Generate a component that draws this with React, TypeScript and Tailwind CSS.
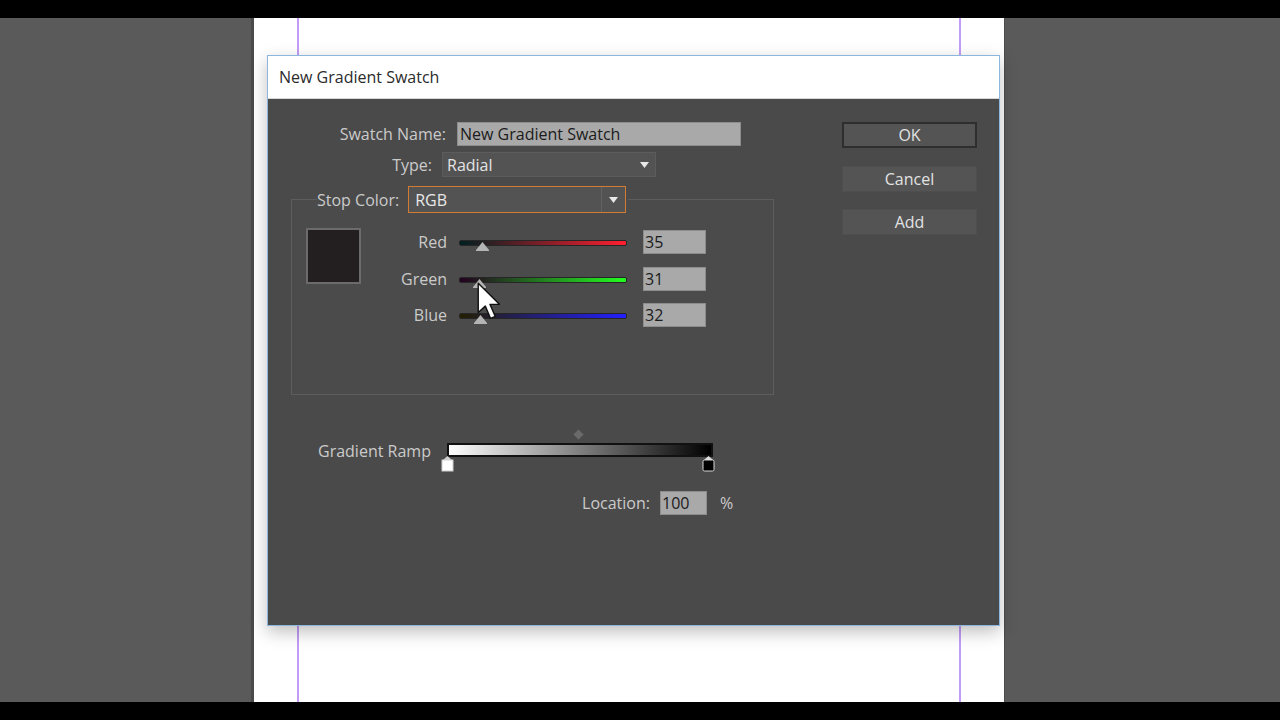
import React from "react";

const font = { fontFamily: '"Open Sans", "Liberation Sans", sans-serif' };

const channels = [
  { name: "Red", value: 35, track: "bg-[linear-gradient(to_right,#001f20,#ff1f30)]" },
  { name: "Green", value: 31, track: "bg-[linear-gradient(to_right,#230020,#23ff20)]" },
  { name: "Blue", value: 32, track: "bg-[linear-gradient(to_right,#231f00,#231fff)]" },
];

const Arrow = () => (
  <svg width="9" height="6" viewBox="0 0 9 6">
    <path d="M0 0 L9 0 L4.5 6 Z" fill="#e8e8e8" />
  </svg>
);

const Cursor = () => (
  <svg width="26" height="40" viewBox="0 0 22 34">
    <path
      d="M1 1 L1 26 L7 20.5 L11.5 31 L15.5 29.3 L11 19 L19 19 Z"
      fill="#ffffff"
      stroke="#111111"
      strokeWidth="1.2"
      strokeLinejoin="round"
    />
  </svg>
);

const Button = ({ label, primary }: { label: string; primary?: boolean }) => (
  <div
    className={`flex h-[26px] w-[135px] items-center justify-center bg-[#545454] text-[16px] text-[#e2e2e2] ${
      primary ? "border-2 border-[#2e2e2e]" : "border border-[#4e4e4e]"
    }`}
  >
    {label}
  </div>
);

const App = () => {
  return (
    <div className="flex h-screen w-screen flex-col overflow-hidden bg-black" style={font}>
      <div className="h-[18px] shrink-0 bg-black" />
      <div className="flex min-h-0 flex-1">
        <div className="w-[254px] shrink-0 border-r-[3px] border-[#4a4a4a] bg-[#5a5a5a]" />
        <div className="relative w-[750px] shrink-0 bg-white">
          {/* guides */}
          <div className="absolute bottom-0 left-[43px] top-0 w-[2px] bg-[#c39cf7]" />
          <div className="absolute bottom-0 left-[705px] top-0 w-[2px] bg-[#c39cf7]" />

          {/* dialog */}
          <div className="absolute left-[13px] top-[37px] flex h-[571px] w-[733px] flex-col border border-[#8db6df] shadow-[0_6px_16px_rgba(0,0,0,0.25)]">
            <div className="flex h-[43px] shrink-0 items-center border-b border-[#d8d8d8] bg-white pl-[11px] text-[16px] text-[#2b2b2b]">
              New Gradient Swatch
            </div>
            <div className="relative flex flex-1 bg-[#4a4a4a] text-[16px] text-[#cacaca]">
              <div className="flex flex-1 flex-col pt-[23px]">
                {/* swatch name */}
                <div className="flex items-center">
                  <div className="w-[178px] text-right">Swatch Name:</div>
                  <div className="ml-[11px] flex h-[24px] w-[284px] items-center border border-[#8d8d8d] bg-[#a9a9a9] pl-[2px] text-[16px] text-[#1b1b1b]">
                    New Gradient Swatch
                  </div>
                </div>
                {/* type */}
                <div className="mt-[6px] flex items-center">
                  <div className="w-[164px] text-right">Type:</div>
                  <div className="ml-[10px] flex h-[25px] w-[214px] items-center justify-between border border-[#5c5c5c] bg-[#535353] pl-[4px] pr-[6px] text-[#e4e4e4]">
                    <span>Radial</span>
                    <Arrow />
                  </div>
                </div>

                {/* stop color group */}
                <fieldset className="ml-[23px] mt-[9px] h-[209px] w-[483px] border border-[#5d5d5d] bg-[#4b4b4b] pl-[14px] pt-[15px]">
                  <legend className="ml-[11px] flex items-center pr-[2px]">
                    <span>Stop Color:</span>
                    <div className="ml-[9px] flex h-[27px] w-[218px] items-center border-[1.5px] border-[#d17c32] bg-[#535353] text-[#e8e8e8]">
                      <span className="flex-1 pl-[6px]">RGB</span>
                      <div className="flex h-full w-[24px] items-center justify-center border-l border-[#626262]">
                        <Arrow />
                      </div>
                    </div>
                  </legend>
                  <div className="flex">
                    <div className="h-[56px] w-[55px] border-2 border-[#6b6b6b] bg-[#231f20]" />
                    <div className="flex flex-col gap-[12.5px] pt-[2px]">
                      {channels.map((c) => (
                        <div key={c.name} className="flex h-[24px] items-center">
                          <div className="w-[86px] text-right">{c.name}</div>
                          <div className="relative ml-[12px] h-[24px] w-[168px]">
                            <div
                              className={`absolute left-0 right-0 top-[10px] h-[6px] rounded-[2px] border border-[#262626] ${c.track}`}
                            />
                            <svg
                              className="absolute top-[12px]"
                              style={{ left: (c.value / 255) * 168 - 6 }}
                              width="13"
                              height="9"
                              viewBox="0 0 13 9"
                            >
                              <path d="M6.5 0 L13 8 L13 9 L0 9 L0 8 Z" fill="#b4b4b4" />
                            </svg>
                          </div>
                          <div className="ml-[16px] flex h-[24px] w-[63px] items-center border border-[#8d8d8d] bg-[#a9a9a9] pl-[1px] text-[#1b1b1b]">
                            {c.value}
                          </div>
                        </div>
                      ))}
                    </div>
                  </div>
                </fieldset>

                {/* gradient ramp */}
                <div className="mt-[36px] flex items-center">
                  <div className="ml-[50px] w-[129px]">Gradient Ramp</div>
                  <div className="relative h-[40px] w-[266px]">
                    <svg className="absolute left-[126px] top-[-2px]" width="11" height="11" viewBox="0 0 11 11">
                      <path d="M5.5 0.5 L10.5 5.5 L5.5 10.5 L0.5 5.5 Z" fill="#6a6a6a" stroke="#5a5a5a" />
                    </svg>
                    <div className="absolute left-0 right-0 top-[12px] h-[14px] border-2 border-[#111111] bg-[linear-gradient(to_right,#ffffff,#000000)]" />
                    <svg className="absolute left-[-6px] top-[25px]" width="13" height="16" viewBox="0 0 13 16">
                      <path d="M6.5 0 L11 4 L2 4 Z" fill="#cfcfcf" />
                      <rect x="1" y="4" width="11" height="11" fill="#ffffff" stroke="#cfcfcf" />
                    </svg>
                    <svg className="absolute left-[255px] top-[25px]" width="13" height="16" viewBox="0 0 13 16">
                      <path d="M6.5 0 L11 4 L2 4 Z" fill="#e0e0e0" />
                      <rect x="1" y="4" width="11" height="11" rx="1.5" fill="#000000" stroke="#d8d8d8" />
                    </svg>
                  </div>
                </div>

                {/* location */}
                <div className="mt-[20px] flex items-center">
                  <div className="w-[382px] text-right">Location:</div>
                  <div className="ml-[10px] flex h-[24px] w-[47px] items-center border border-[#8d8d8d] bg-[#a9a9a9] pl-[1px] text-[#1b1b1b]">
                    100
                  </div>
                  <div className="ml-[13px]">%</div>
                </div>
              </div>

              {/* buttons */}
              <div className="flex w-[157px] shrink-0 flex-col gap-[18px] pt-[23px]">
                <Button label="OK" primary />
                <Button label="Cancel" />
                <div className="-mt-[1px]">
                  <Button label="Add" />
                </div>
              </div>

              {/* mouse pointer */}
              <div className="absolute left-[209px] top-[183px]">
                <Cursor />
              </div>
            </div>
          </div>
        </div>
        <div className="flex-1 border-l border-[#4c4c4c] bg-[#5a5a5a]" />
      </div>
      <div className="h-[18px] shrink-0 bg-black" />
    </div>
  );
};

export default App;
